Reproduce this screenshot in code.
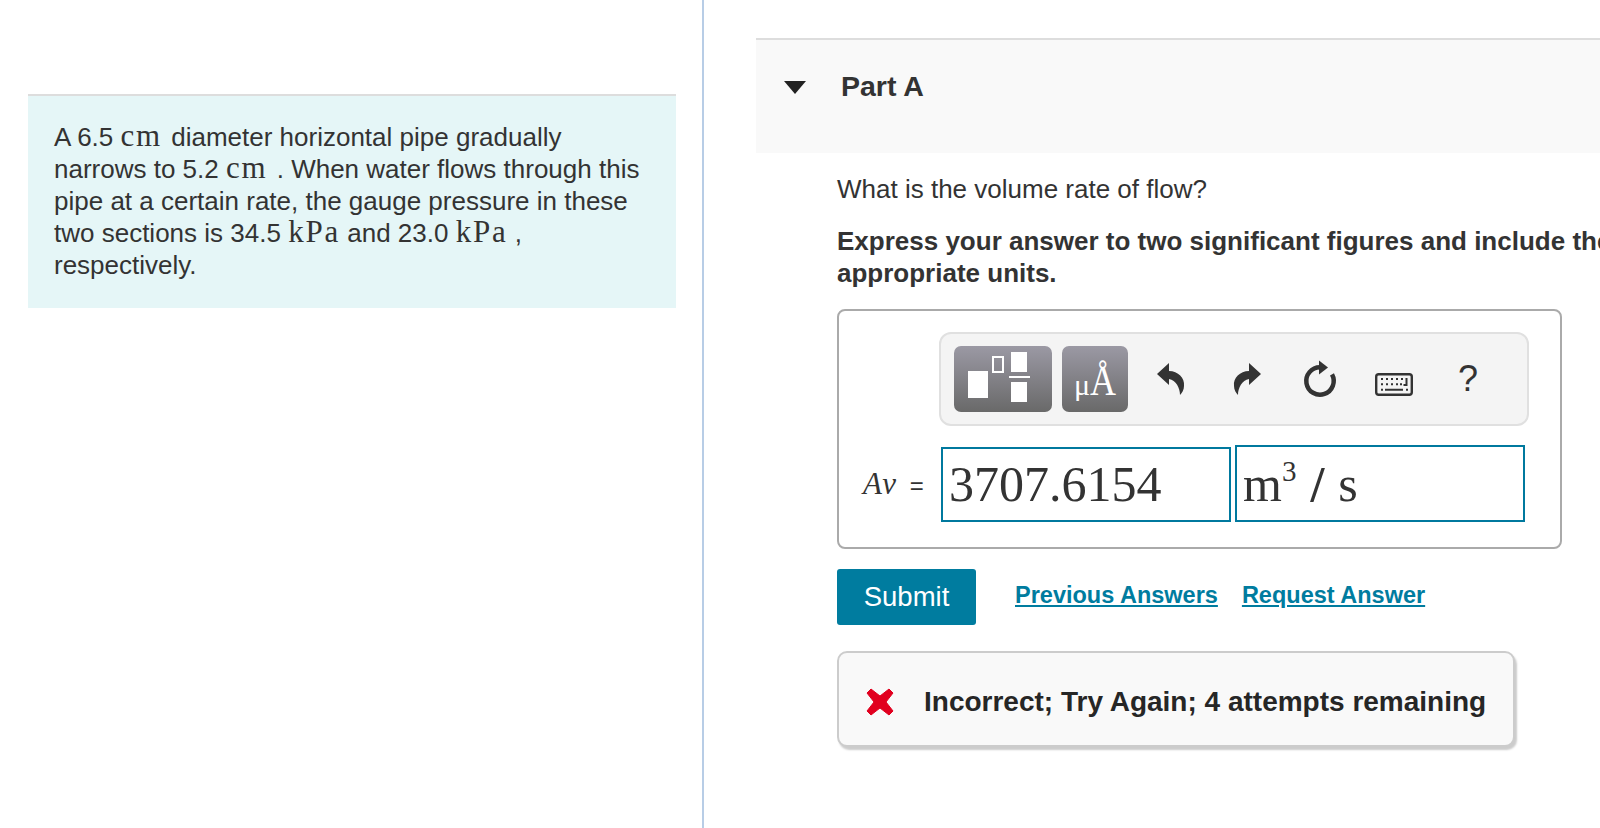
<div class="page">
  <aside class="left">
    <div class="statement">
      <p>A 6.5 <span class="m gap">cm</span> diameter horizontal pipe gradually narrows to 5.2 <span class="m gap">cm</span> . When water flows through this pipe at a certain rate, the gauge pressure in these two sections is 34.5 <span class="m">kPa</span> and 23.0 <span class="m">kPa</span> , respectively.</p>
    </div>
  </aside>
  <main class="right">
    <header class="part">
      <svg class="caret" width="22" height="13" viewBox="0 0 22 13"><path d="M0 0H22L11 13Z" fill="#222"/></svg>
      <h2>Part A</h2>
    </header>
    <section class="body">
      <p class="q">What is the volume rate of flow?</p>
      <p class="ins">Express your answer to two significant figures and include the appropriate units.</p>
      <div class="answer">
        <div class="toolbar">
          <button class="tbtn t1" aria-label="templates">
            <svg width="98" height="66" viewBox="1 0 98 66">
              <rect x="15" y="25" width="20" height="27" fill="#fff"/>
              <rect x="40" y="11" width="10" height="15" fill="none" stroke="#fff" stroke-width="2"/>
              <rect x="58" y="6" width="16" height="20" fill="#fff"/>
              <rect x="56" y="30" width="21" height="2" fill="#fff"/>
              <rect x="58" y="36" width="16" height="20" fill="#fff"/>
            </svg>
          </button>
          <button class="tbtn t2"><span class="mu">μ</span><span class="aa">Å</span></button>
          <svg class="ic i1" width="31" height="34" viewBox="15 12 31 34"><path d="M17 24 29 13V21C38 21 45 28 44 36 44 40 42 43 40 45 40 38 36 30 29 29V35Z" fill="#333"/></svg>
          <svg class="ic i2" width="31" height="34" viewBox="92 12 31 34"><path d="M121 24 109 13V21C100 21 93 28 94 36 94 40 96 43 98 45 98 38 102 30 109 29V35Z" fill="#333"/></svg>
          <svg class="ic i3" width="36" height="40" viewBox="162 10 36 40"><path d="M180 18.300A13.700 13.700 0 1 0 192 25.400" fill="none" stroke="#333" stroke-width="4.500"/><path d="M179 11.500 188 18.500 179 25.500Z" fill="#333"/></svg>
          <svg class="ic i4" width="38" height="23" viewBox="0 0 38 23">
            <rect x="1.200" y="1.200" width="35.600" height="20.600" rx="2.500" fill="#f4f4f4" stroke="#333" stroke-width="2.400"/>
            <path d="M6 6h2M11 6h2M16 6h2M21 6h2M26 6h2M31.500 5v7h-3M6 11.300h2M11 11.300h2M16 11.300h2M21 11.300h2M25 11.300h2M6 16.800h2M10 16.800h18M31 16.800h2" stroke="#333" stroke-width="2" fill="none"/>
          </svg>
          <span class="help">?</span>
        </div>
        <div class="inputs">
          <span class="label"><i>Av</i> <span class="eq">=</span></span>
          <div class="field value">3707.6154</div>
          <div class="field unit">m<sup>3</sup> <span class="slash">/</span> s</div>
        </div>
      </div>
      <div class="actions">
        <button class="submit">Submit</button>
        <a href="#a" class="first">Previous Answers</a>
        <a href="#b">Request Answer</a>
      </div>
      <div class="feedback">
        <svg width="28" height="28" viewBox="0 0 28 28"><path d="M5 1 14 8 23 1 27 5 20 14 27 23 23 27 14 20 5 27 1 23 8 14 1 5Z" fill="#e1001f" stroke="#e1001f" stroke-width="1" stroke-linejoin="round"/></svg>
        <strong>Incorrect; Try Again; 4 attempts remaining</strong>
      </div>
    </section>
  </main>
</div>

<style>
  :global(body) { margin: 0; background: #fff; overflow: hidden; }
  .page { display: flex; width: 1600px; height: 828px; overflow: hidden; font-family: "Liberation Sans", Arial, sans-serif; color: #333; }
  .left { width: 704px; flex: none; box-sizing: border-box; padding: 94px 26px 0 28px; border-right: 2px solid #b8cde6; }
  .statement { background: #e5f6f7; border-top: 2px solid #ddd; height: 214px; box-sizing: border-box; padding: 25px 27px 0 26px; }
  .statement p { margin: 0; font-size: 26px; line-height: 32px; }
  .m { font-family: "Liberation Serif", serif; font-size: 31px; letter-spacing: 1.800px; line-height: 0; }
  .gap { margin-right: 2px; }
  .right { width: 890px; flex: none; margin-left: 52px; padding-top: 38px; }
  .part { display: flex; align-items: flex-start; background: #f9f9f9; border-top: 2px solid #ddd; height: 115px; box-sizing: border-box; padding: 41px 0 0 28px; }
  .caret { margin-right: 35px; flex: none; }
  h2 { margin: -11px 0 0; font-size: 28.500px; line-height: 32px; font-weight: 700; color: #333; }
  .body { padding: 20px 0 0 81px; }
  .q { margin: 0; font-size: 26px; line-height: 32px; }
  .ins { margin: 20px 0 0; font-size: 26px; line-height: 32px; font-weight: 700; width: 800px; }
  .answer { margin-top: 20px; width: 725px; height: 240px; box-sizing: border-box; border: 2px solid #aaa; border-radius: 8px; padding: 21px 0 0 101px; }
  .toolbar { display: flex; align-items: center; width: 590px; height: 94px; box-sizing: border-box; border: 2px solid #e0e0e0; border-radius: 12px; background: #f4f4f4; padding-left: 12px; margin-left: -1px; padding-left: 13px; }
  .tbtn { border: 0; padding: 0; height: 66px; border-radius: 7px; background: linear-gradient(#9b99a4, #696969); flex: none; color: #fff; font-family: "Liberation Serif", serif; }
  .t1 { width: 98px; }
  .t1 svg { display: block; }
  .t2 { width: 66px; margin-left: 10px; padding-top: 15px; line-height: 34px; }
  .mu { font-size: 30px; }
  .aa { font-size: 36px; display: inline-block; transform: scaleY(1.180); transform-origin: 50% 82%; }
  .ic { flex: none; }
  .i1 { margin-left: 27px; }
  .i2 { margin-left: 46px; }
  .i3 { margin-left: 39px; }
  .i4 { margin-left: 37px; margin-top: 10px; }
  .help { margin-left: 45px; font-size: 36px; color: #333; }
  .inputs { display: flex; align-items: flex-end; margin-top: 19px; margin-left: -101px; padding-left: 24px; }
  .label { width: 78px; flex: none; align-self: center; font-family: "Liberation Serif", serif; font-size: 31px; padding-top: 1px; white-space: nowrap; }
  .label i { letter-spacing: 2px; }
  .eq { font-family: "Liberation Sans", sans-serif; font-size: 24px; margin-left: 4px; }
  .field { border: 2px solid #00799e; box-sizing: border-box; font-family: "Liberation Serif", serif; font-size: 50px; color: #333; background: #fff; width: 290px; padding-left: 6px; }
  .value { height: 75px; line-height: 70px; }
  .unit { height: 77px; line-height: 74px; margin-left: 4px; padding-left: 6px; word-spacing: 1.500px; }
  .slash { font-weight: 700; }
  sup { font-size: 29px; line-height: 0; vertical-align: 20px; }
  .actions { display: flex; align-items: center; margin-top: 20px; }
  .submit { width: 139px; height: 56px; border: 0; border-radius: 3px; background: #007c9f; color: #fff; font-family: "Liberation Sans", sans-serif; font-size: 27.500px; padding: 0; }
  a { color: #007c9f; font-size: 23.500px; font-weight: 700; margin-left: 24px; text-decoration: underline; margin-bottom: 3px; }
  a.first { margin-left: 39px; }
  .feedback { display: flex; align-items: center; margin-top: 26px; width: 678px; height: 96px; box-sizing: border-box; border: 2px solid #ccc; border-radius: 10px; background: #f9f9f9; box-shadow: 2px 3px 2px #ccc; padding: 6px 0 0 27px; }
  .feedback strong { margin-left: 30px; font-size: 28px; color: #262626; white-space: nowrap; }
</style>
